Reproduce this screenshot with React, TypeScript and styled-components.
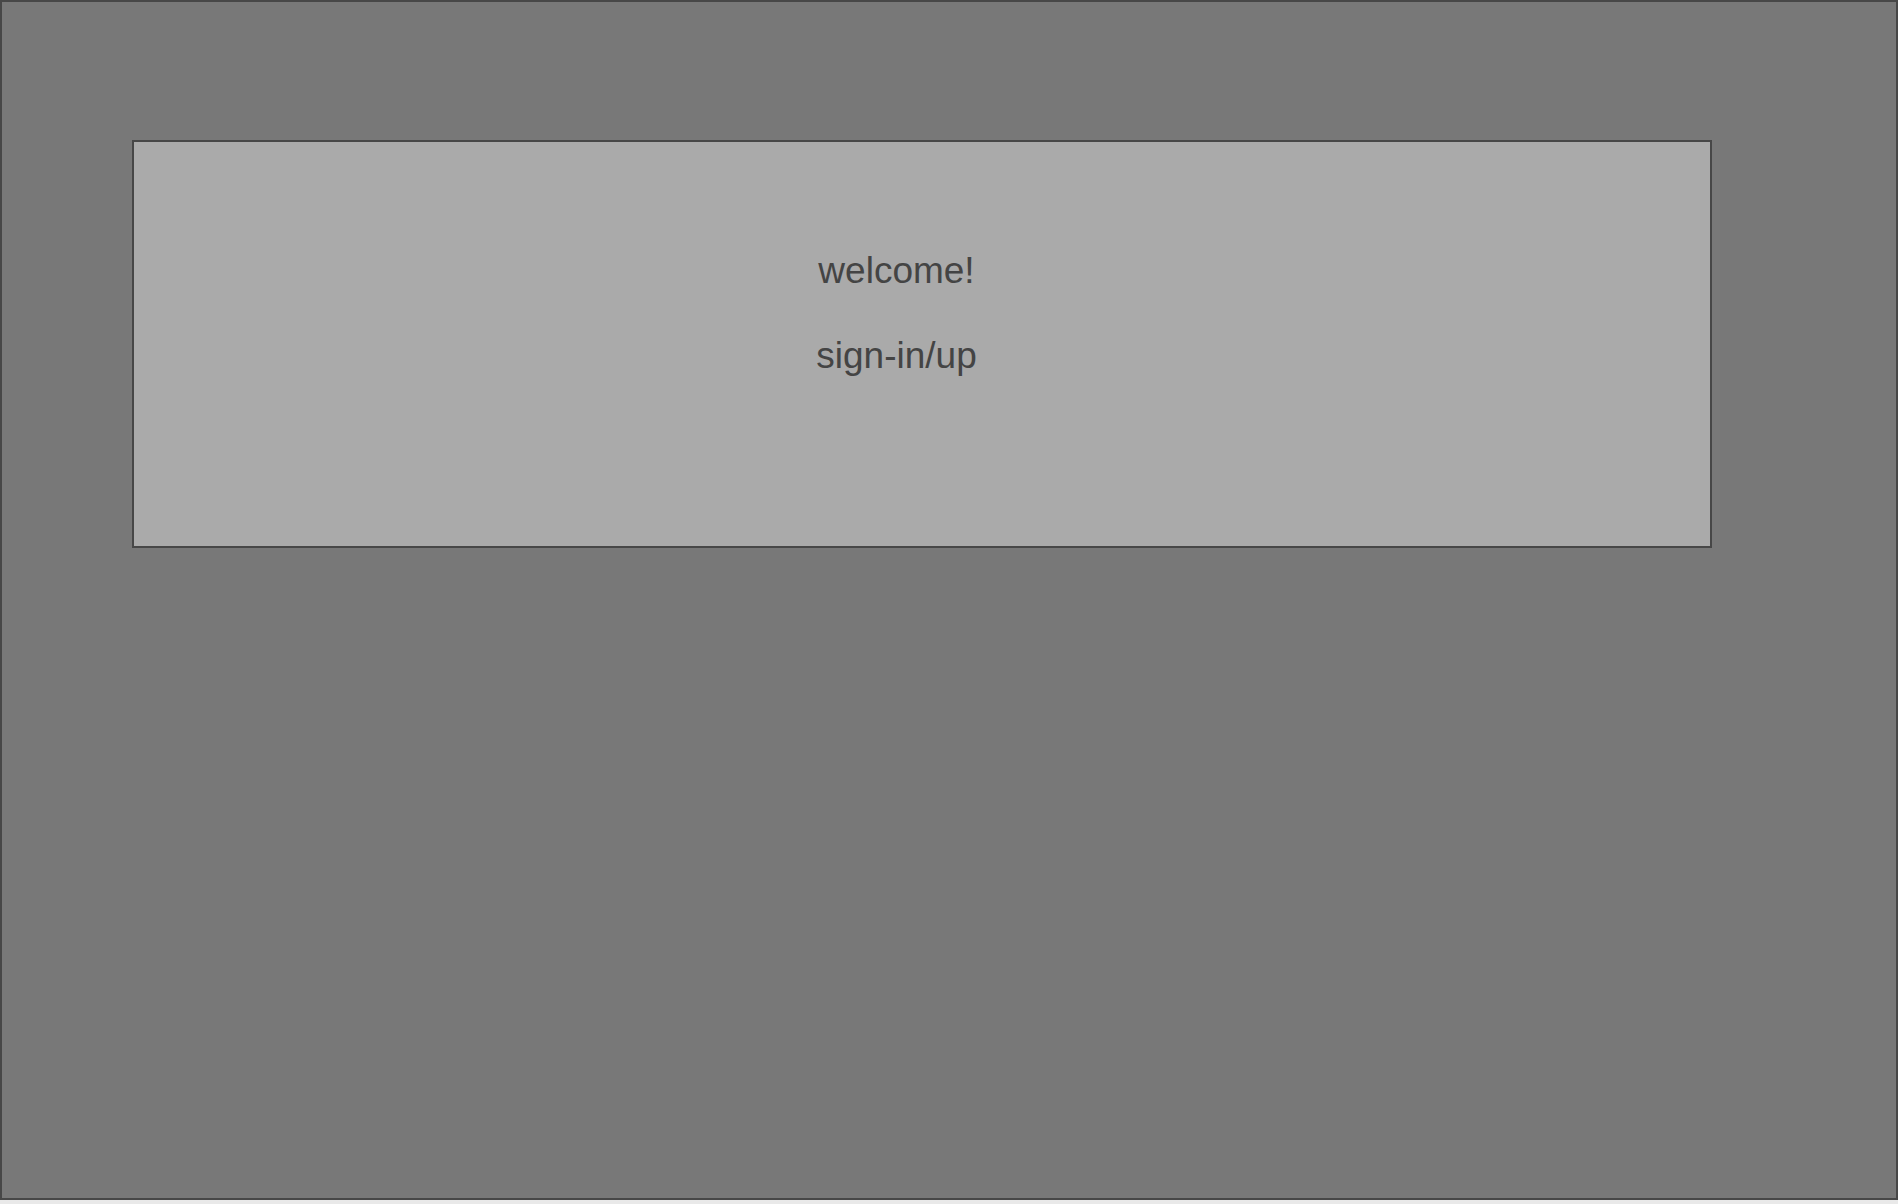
import styled, { createGlobalStyle } from 'styled-components';

const GlobalStyle = createGlobalStyle`
    html, body {
        margin: 0;
        padding: 0;
        background: #e9e9e9;
        font-family: 'Liberation Sans', Arial, sans-serif;
    }
`;

export default function App() {
    return (
        <>
            <GlobalStyle />
            <Page>
                <Banner>
                    <Message>
                        <Line>welcome!</Line>
                        <Line>sign-in/up</Line>
                    </Message>
                </Banner>
            </Page>
        </>
    );
}

const Page = styled.div`
    box-sizing: border-box;
    width: 1898px;
    height: 1200px;
    padding: 138px 0 0 130px;
    background: #787878;
    border: 2px solid #474747;
`;

const Banner = styled.section`
    box-sizing: border-box;
    width: 1580px;
    height: 408px;
    padding: 110px 51px 0 0;
    background: #aaaaaa;
    border: 2px solid #474747;
`;

const Message = styled.div`
    display: flex;
    flex-direction: column;
    align-items: center;
    gap: 48px;
`;

const Line = styled.p`
    margin: 0;
    font-size: 37px;
    line-height: 37px;
    color: #444444;
`;
